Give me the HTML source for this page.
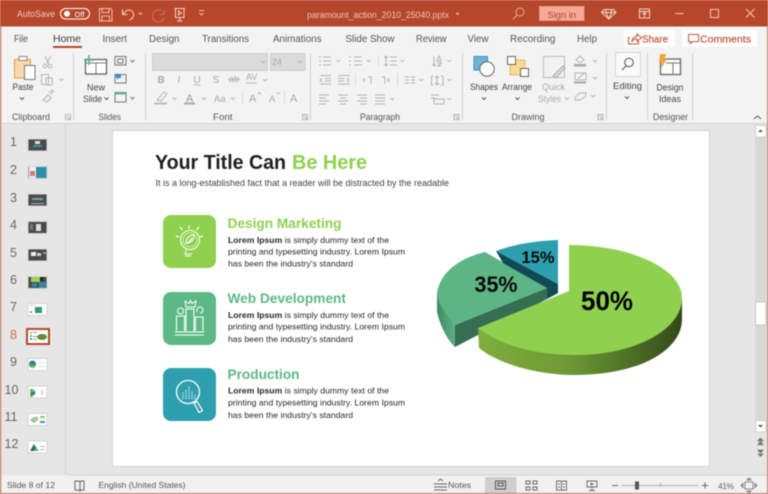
<!DOCTYPE html>
<html><head><meta charset="utf-8"><style>
html,body{margin:0;padding:0;width:768px;height:494px;overflow:hidden;background:#e6e6e6}
svg{display:block;filter:blur(.4px)}
text{font-family:"Liberation Sans",sans-serif;white-space:pre}
.rb{font-size:9px;fill:#555}
.dim{fill:#aaa}
.tab{font-size:10px;fill:#555}
.ic{fill:none;stroke:#888;stroke-width:1}
.lt{fill:none;stroke:#b5b5b5;stroke-width:1}
.b{font-size:8.6px;fill:#262626}
.b tspan{font-weight:bold}
.h{font-size:14px;font-weight:bold}
.n{font-size:12.5px;fill:#666}
</style></head><body>
<svg width="768" height="494" viewBox="0 0 768 494" xmlns="http://www.w3.org/2000/svg">
<defs>
<linearGradient id="g50" x1="0" x2="1" y1="0" y2="0"><stop offset="0" stop-color="#7fae3d"/><stop offset=".45" stop-color="#6d9934"/><stop offset=".72" stop-color="#4f7327"/><stop offset="1" stop-color="#34491b"/></linearGradient>
<linearGradient id="g35" x1="0" x2="1" y1="0" y2="0"><stop offset="0" stop-color="#3f8a63"/><stop offset="1" stop-color="#5fb184"/></linearGradient>
</defs>
<rect width="768" height="494" fill="#e6e6e6"/>
<!-- title bar -->
<rect width="768" height="26.5" fill="#b7472a"/>
<text x="17" y="17" font-size="9" fill="#eecabf" textLength="38" lengthAdjust="spacingAndGlyphs">AutoSave</text>
<rect x="60.5" y="8.5" width="29" height="10.5" rx="5.2" fill="none" stroke="#fff"/>
<circle cx="67" cy="13.7" r="3" fill="#fff"/>
<text x="74.5" y="17" font-size="7.5" fill="#fff" textLength="10">Off</text>
<g fill="none" stroke="#ebc0b3" stroke-width="1">
<path d="M99.5 8.5h11l1.500 1.500v11h-12.500z M102 8.500v4h7v-4 M102 21v-5h7.500v5"/>
<path d="M122.500 9.500v5h5 M122.500 14.500l3.500-3.500c4-2.500 8 .5 7.500 4.500-.3 2-1.500 3.500-4 4.500" stroke="#f3d5cb"/>
<path d="M138.500 12.500l1.800 1.800 1.800-1.800" />
<path d="M164 10v4.500h-4 M161.500 10.500c-4-2-9 1-9 5 0 4 3 6.500 6 6.500 3 0 5-2 5.500-4.500" stroke="#c9755c"/>
<path d="M174.500 8.500h10.500 M175.500 8.500v9h8.500v-9 M179.800 17.500v3.500 M177 21h5.500 M178.500 11l3 2-3 2z" stroke="#f3d5cb"/>
<path d="M199 10.500h5 M199.500 13l2 2 2-2" />
</g>
<text x="307" y="18" font-size="9" fill="#ecc6ba" textLength="142" lengthAdjust="spacingAndGlyphs">paramount_action_2010_25040.pptx</text>
<path d="M455.500 13l2 2 2-2z" fill="#ecc6ba"/>
<g fill="none" stroke="#e3a997" stroke-width="1"><circle cx="520" cy="12" r="4"/><path d="M517 15l-4 4.500"/></g>
<rect x="539.500" y="6.500" width="44.500" height="14" fill="#f3a996" stroke="#f2bcae" stroke-dasharray="1 1"/>
<text x="547.500" y="18" font-size="9.500" fill="#b7472a" textLength="28.500" lengthAdjust="spacingAndGlyphs">Sign in</text>
<g fill="none" stroke="#f3d5cb" stroke-width="1">
<path d="M604 9.500h9.500l2.500 3-7.200 6.500-7.300-6.500z M601.500 12.500h14.500 M606 12.500l2.800 6.500 2.800-6.500 M606 9.500l0 3M611.500 9.500v3"/>
<path d="M639.500 9h10v9h-10z M639.500 11.500h10 M644.500 17v-4.500 M642.500 14.500l2-2 2 2"/>
<path d="M675 13.500h8.500" stroke="#f0c8bc"/>
<rect x="710.500" y="9.500" width="8" height="8" stroke="#f0c8bc"/>
<path d="M746 9l8.500 8.500 M754.500 9l-8.500 8.500" stroke="#f0c8bc"/>
</g>
<!-- ribbon -->
<rect y="26.500" width="768" height="97" fill="#f3f3f3"/>
<rect y="123" width="768" height="1" fill="#d5d5d5"/>
<text class="tab" x="14" y="42" textLength="14" lengthAdjust="spacingAndGlyphs">File</text>
<text class="tab" x="53" y="42" textLength="28" lengthAdjust="spacingAndGlyphs" style="fill:#3c3c3c">Home</text>
<rect x="53" y="46" width="29" height="2" fill="#b7472a"/>
<text class="tab" x="102.500" y="42" textLength="24.500" lengthAdjust="spacingAndGlyphs">Insert</text>
<text class="tab" x="149" y="42" textLength="30.500" lengthAdjust="spacingAndGlyphs">Design</text>
<text class="tab" x="202" y="42" textLength="47" lengthAdjust="spacingAndGlyphs">Transitions</text>
<text class="tab" x="273" y="42" textLength="48.500" lengthAdjust="spacingAndGlyphs">Animations</text>
<text class="tab" x="345.500" y="42" textLength="49" lengthAdjust="spacingAndGlyphs">Slide Show</text>
<text class="tab" x="416" y="42" textLength="30.500" lengthAdjust="spacingAndGlyphs">Review</text>
<text class="tab" x="467.500" y="42" textLength="21" lengthAdjust="spacingAndGlyphs">View</text>
<text class="tab" x="510" y="42" textLength="45.500" lengthAdjust="spacingAndGlyphs">Recording</text>
<text class="tab" x="577" y="42" textLength="20" lengthAdjust="spacingAndGlyphs">Help</text>
<rect x="624" y="30" width="51" height="16.500" fill="#fff"/>
<g fill="none" stroke="#c2553a"><path d="M630 37.500h-1.500v6.500h10v-3 M632 41c.5-3 2.500-4.500 5-4.500v-2.500l4.500 3.700-4.500 3.700v-2.500c-2 0-3.500.5-5 2.500z"/></g>
<text x="642" y="42.500" font-size="10" fill="#c2553a" font-weight="500" stroke="#c2553a" stroke-width=".2" textLength="26" lengthAdjust="spacingAndGlyphs">Share</text>
<rect x="682" y="30" width="75" height="16.500" fill="#fff"/>
<path d="M688.500 34.500h10v7h-6l-2 2v-2h-2z" fill="none" stroke="#c2553a"/>
<text x="700" y="42.500" font-size="10" fill="#c2553a" stroke="#c2553a" stroke-width=".2" textLength="51" lengthAdjust="spacingAndGlyphs">Comments</text>
<g fill="#d0d0d0"><rect x="73" y="53" width="1" height="67"/><rect x="145" y="53" width="1" height="67"/><rect x="310" y="53" width="1" height="67"/><rect x="462" y="53" width="1" height="67"/><rect x="606" y="53" width="1" height="67"/><rect x="647" y="53" width="1" height="67"/><rect x="692" y="53" width="1" height="67"/></g>
<!-- clipboard -->
<rect x="14.500" y="59.500" width="16" height="18.500" fill="#f8d9a8" stroke="#e59a3e"/>
<rect x="19" y="56.500" width="8" height="4" fill="#fff" stroke="#888"/>
<rect x="24.500" y="65.500" width="10.500" height="14" fill="#fff" stroke="#777"/>
<text class="rb" x="12.500" y="90" textLength="21" lengthAdjust="spacingAndGlyphs" style="fill:#444">Paste</text>
<path d="M20 97.500l2 2 2-2" class="ic" style="stroke:#555"/>
<g class="lt"><path d="M45 56l3.500 8 M50.500 56l-3.500 8"/><circle cx="45" cy="66" r="1.800"/><circle cx="50" cy="66" r="1.800"/><path d="M41.500 74.500h7v10h-7z M46 78h6v7h-6z"/><path d="M43 100l5-5 3 3-4 4z M49 93l3-3 1.500 1.500-3 3"/><path d="M59.500 78.500l2 2 2-2"/></g>
<text class="rb" x="12" y="120" textLength="38" lengthAdjust="spacingAndGlyphs">Clipboard</text>
<path d="M65.500 114.500h5v5h-5z M67 116l3 3" fill="none" stroke="#aaa" stroke-width=".8"/>
<!-- slides -->
<rect x="85.500" y="59.500" width="21" height="14.500" fill="#fff" stroke="#666" stroke-width="1.300"/>
<path d="M85.500 63h21 M96 63v11" stroke="#777" fill="none"/>
<path d="M89 55v10 M84 60h10" stroke="#4fb982" stroke-width="1.600" fill="none"/>
<text class="rb" x="87" y="90.500" textLength="18" lengthAdjust="spacingAndGlyphs" style="fill:#444">New</text>
<text class="rb" x="83" y="102" textLength="19" lengthAdjust="spacingAndGlyphs" style="fill:#444">Slide</text>
<path d="M104.500 97.500l2 2 2-2" class="ic" style="stroke:#555"/>
<g class="ic" style="stroke:#777"><rect x="115" y="56.500" width="11" height="8.500"/><path d="M118 59h5v4h-5z"/><path d="M130.500 60l2 2 2-2"/><rect x="115" y="74.500" width="11" height="8.500"/><rect x="115" y="92.500" width="11" height="9.500"/><path d="M130.500 97l2 2 2-2"/></g>
<path d="M115 92.500h11v2h-11z" fill="#62b487"/>
<path d="M115 76l3-3v2h3v3h-3v2z" fill="#3a8fc4"/>
<text class="rb" x="98.500" y="120" textLength="22.500" lengthAdjust="spacingAndGlyphs">Slides</text>
<!-- font -->
<rect x="152.500" y="53.500" width="115" height="17" fill="#dbdbdb" stroke="#cecece"/>
<rect x="270.500" y="53.500" width="34.500" height="17" fill="#dbdbdb" stroke="#cecece"/>
<path d="M261 61l2 2 2-2 M298 61l2 2 2-2" class="lt"/>
<text x="272" y="65" font-size="9" fill="#aaa">24</text>
<g font-size="10" fill="#a8a8a8">
<text x="157.500" y="83" font-weight="bold">B</text><text x="177.500" y="83" font-style="italic">I</text><text x="193.500" y="83">U</text><rect x="193.500" y="84.500" width="7" height=".8" fill="#aaa"/><text x="212.500" y="83">S</text>
<text x="229" y="82" font-size="9">ab</text><rect x="228" y="79" width="12" height=".8" fill="#aaa"/><text x="246" y="80" font-size="9">AV</text>
<path d="M246 83h11" stroke="#bbb" fill="none"/><path d="M263 79l2 2 2-2" class="lt"/>
<text x="186" y="102" font-size="11" fill="#999">A</text><text x="214" y="102" font-size="9.500">Aa</text>
<text x="249" y="102" font-size="11">A</text><text x="269" y="102" font-size="9.500">A</text><text x="290" y="102" font-size="11">A</text>
</g>
<path d="M258 94l1.500-1.500 1.500 1.500 M277 92.500l1.500 1.500 1.500-1.500" class="lt"/>
<path d="M157 100l7-8 3 2-6 7z" class="lt"/><rect x="154" y="102.500" width="13" height="2" fill="#bbb"/><rect x="184" y="102.500" width="11" height="2" fill="#aaa"/>
<path d="M172.500 97.500l2 2 2-2 M202 97.500l2 2 2-2 M231 97.500l2 2 2-2" class="lt"/>
<rect x="242" y="91" width="1" height="13" fill="#ddd"/><rect x="284" y="91" width="1" height="13" fill="#ddd"/>
<text class="rb" x="213" y="120" textLength="19.500" lengthAdjust="spacingAndGlyphs">Font</text>
<path d="M302.500 114.500h5v5h-5z M304 116l3 3" class="lt" stroke-width=".8"/>
<!-- paragraph -->
<g class="lt">
<path d="M319 57h2 M319 61h2 M319 65h2 M323 57h8 M323 61h8 M323 65h8 M336.500 60l1.800 1.800 1.800-1.800"/>
<path d="M349 57h2 M349 61h2 M349 65h2 M354 57h8 M354 61h8 M354 65h8 M367 60l1.800 1.800 1.800-1.800"/>
<path d="M386 56v10 M384 58l2-2 2 2 M384 64l2 2 2-2 M390 57h7 M390 61h7 M390 65h7 M400.500 60l1.800 1.800 1.800-1.800"/>
<path d="M434 56v10 M432 64l2 2 2-2 M439 56l-2 5h4z M437.500 63h4l-4 3h4 M447.500 60l1.800 1.800 1.800-1.800"/>
<path d="M320 75.500h11 M325 78.500h6 M325 81h6 M320 84h11 M322 78l-2 2 2 2"/>
<path d="M338 75.500h12 M338 78.500h6 M338 81h6 M338 84h12 M347 78l2 2-2 2"/>
<path d="M363 78l2 2-2 2 M368 77h3v7 M381 78l-0 0 M382 77h3v7 M389.500 78l-2 2 2 2"/>
<path d="M405 77h4 M405 80h4 M405 83h4 M411 77h4 M411 80h4 M411 83h4 M419.500 79l1.800 1.800 1.800-1.800"/>
<path d="M431.500 76h2 M441 76h2 M431.500 76v9h2 M443 76v9h-2 M437 76v9 M435 78l2-2 2 2 M435 83l2 2 2-2 M447.500 79l1.800 1.800 1.800-1.800"/>
<path d="M319 95h10 M319 98h7 M319 101h10 M319 104h7 M338 95h10 M340 98h6 M338 101h10 M340 104h6 M357 95h10 M360 98h7 M357 101h10 M360 104h7 M375 95h10 M375 98h10 M375 101h10 M375 104h10 M390.500 98l1.800 1.800 1.800-1.800"/>
<path d="M431 95h8 M431 98h4 M434 99h10v5h-10z M447.500 98l1.800 1.800 1.800-1.800"/>
</g>
<rect x="378" y="55" width="1" height="12" fill="#ddd"/><rect x="355" y="73" width="1" height="13" fill="#ddd"/><rect x="397" y="73" width="1" height="13" fill="#ddd"/>
<text class="rb" x="360" y="120" textLength="40" lengthAdjust="spacingAndGlyphs">Paragraph</text>
<path d="M454 114.500h5v5h-5z M455.500 116l3 3" class="lt" stroke-width=".8"/>
<!-- drawing -->
<rect x="474" y="56.500" width="13.500" height="13.500" fill="#6eb3d8" stroke="#3a8fc4"/>
<circle cx="487" cy="69" r="7.200" fill="#fbfbfb" stroke="#666"/>
<text class="rb" x="470" y="90" textLength="28" lengthAdjust="spacingAndGlyphs" style="fill:#444">Shapes</text>
<path d="M482 97.500l2 2 2-2" class="ic" style="stroke:#555"/>
<rect x="510" y="60" width="15" height="15" fill="#fbd98f" stroke="#e59a3e" stroke-dasharray="1.500 1"/>
<rect x="507.500" y="56.500" width="8" height="8" fill="#fff" stroke="#666"/>
<rect x="520.500" y="68.500" width="8" height="8" fill="#fff" stroke="#666"/>
<text class="rb" x="502" y="90" textLength="30" lengthAdjust="spacingAndGlyphs" style="fill:#444">Arrange</text>
<path d="M515.500 97.500l2 2 2-2" class="ic" style="stroke:#555"/>
<rect x="543.500" y="56.500" width="21" height="21" fill="#f2f2f2" stroke="#bbb"/>
<path d="M553 76l10-10 2 2-9 10z" fill="#ddd" stroke="#aaa"/>
<text class="rb dim" x="542" y="90" textLength="23" lengthAdjust="spacingAndGlyphs">Quick</text>
<text class="rb dim" x="538" y="102" textLength="23" lengthAdjust="spacingAndGlyphs">Styles</text>
<path d="M565 97.500l2 2 2-2 M593 60l2 2 2-2 M593 77l2 2 2-2 M591 95l2 2 2-2" class="lt"/>
<path d="M576 60l4-4 4 4-4 3z" class="lt"/><rect x="574" y="64" width="12" height="2.500" fill="#aaa"/>
<path d="M575 73h11v7h-11z M578 79l6-6" class="lt"/><rect x="574" y="81.500" width="12" height="2" fill="#aaa"/>
<path d="M575 97l5-4h6l-1 4-5 3h-5z" class="lt"/>
<text class="rb" x="511.500" y="120" textLength="33" lengthAdjust="spacingAndGlyphs">Drawing</text>
<path d="M598 114.500h5v5h-5z M599.500 116l3 3" class="lt" stroke-width=".8"/>
<!-- editing -->
<rect x="615.500" y="52.500" width="25" height="24" fill="#fafafa" stroke="#d5d5d5"/>
<circle cx="629" cy="62.500" r="4.300" fill="none" stroke="#555"/><path d="M626 66l-4 4" stroke="#555" fill="none"/>
<text class="rb" x="613" y="89" textLength="29" lengthAdjust="spacingAndGlyphs" style="fill:#444">Editing</text>
<path d="M625 96.500l2 2 2-2" class="ic" style="stroke:#555"/>
<!-- designer -->
<rect x="660.500" y="59" width="20" height="15.500" fill="#fbfbfb" stroke="#666" stroke-width="1.300"/>
<path d="M666 63h14.500 M673 63v11" stroke="#777" fill="none"/>
<path d="M660 54h6.500l-2.500 5h3l-6.500 10 1.500-7h-3z" fill="#f0a63c"/>
<text class="rb" x="656.500" y="90.500" textLength="27" lengthAdjust="spacingAndGlyphs" style="fill:#444">Design</text>
<text class="rb" x="659" y="102" textLength="22" lengthAdjust="spacingAndGlyphs" style="fill:#444">Ideas</text>
<text class="rb" x="653" y="120" textLength="35" lengthAdjust="spacingAndGlyphs">Designer</text>
<path d="M754 119l3.500-3 3.500 3" fill="none" stroke="#555"/>
<!-- thumb panel -->
<rect x="65" y="124" width="1" height="351" fill="#d0d0d0"/>
<g class="n">
<text x="10" y="146">1</text><text x="10" y="174">2</text><text x="10" y="202">3</text><text x="10" y="229">4</text><text x="10" y="257">5</text><text x="10" y="284">6</text><text x="10" y="311">7</text>
<text x="10" y="339" style="fill:#d2674a">8</text><text x="10" y="366">9</text><text x="4.500" y="394">10</text><text x="4.500" y="421">11</text><text x="4.500" y="448">12</text>
</g>
<g stroke="#d4d4d4" stroke-width="1">
<rect x="28" y="139" width="19" height="12" fill="#4a4a4a"/>
<rect x="28" y="166.500" width="19" height="12" fill="#2f8fa6"/>
<rect x="28" y="194" width="19" height="12" fill="#4a4a4a"/>
<rect x="28" y="221.500" width="19" height="12" fill="#4a4a4a"/>
<rect x="28" y="249" width="19" height="12" fill="#4a4a4a"/>
<rect x="28" y="276.500" width="19" height="12" fill="#4a4a4a"/>
<rect x="28" y="303.500" width="19" height="12" fill="#fff"/>
<rect x="28" y="358.500" width="19" height="12" fill="#fff"/>
<rect x="28" y="386" width="19" height="12" fill="#fff"/>
<rect x="28" y="413.500" width="19" height="12" fill="#fff"/>
<rect x="28" y="441" width="19" height="12" fill="#fff"/>
</g>
<rect x="35" y="141" width="5" height="3" fill="#ddd"/><rect x="33" y="145" width="9" height="2" fill="#3f9a95"/>
<rect x="29" y="167" width="7" height="11" fill="#eee"/><rect x="30" y="171" width="5" height="5" fill="#d87c70"/>
<rect x="32" y="198" width="11" height="2" fill="#6fa5b5"/><rect x="31" y="203" width="13" height="1" fill="#aaa"/>
<rect x="36" y="224" width="5" height="7" fill="#ddd"/><rect x="30" y="224" width="3" height="6" fill="#777"/>
<rect x="31" y="252" width="5" height="4" fill="#eee"/><rect x="37" y="253" width="4" height="3" fill="#ccc"/><rect x="43" y="252" width="3" height="2" fill="#999"/>
<rect x="31" y="277" width="9" height="5" fill="#9ccf55"/><rect x="32" y="283" width="5" height="4" fill="#1f8ea5"/><rect x="39" y="282" width="7" height="6" fill="#3a88a8"/><rect x="40" y="277" width="3" height="4" fill="#222"/>
<rect x="35" y="307" width="7" height="6" fill="#3a8f75"/><rect x="39" y="309" width="3" height="3" fill="#2e9fae"/><rect x="30" y="305" width="5" height="1" fill="#c5e09b"/><rect x="30" y="311" width="2" height="2" fill="#5cb985"/>
<rect x="27" y="329" width="22" height="15" fill="#fff" stroke="#b7472a" stroke-width="2"/>
<ellipse cx="42" cy="337" rx="5" ry="3" fill="#5f8f30"/><rect x="30" y="332" width="2" height="2" fill="#8fd14f"/><rect x="30" y="335" width="2" height="2" fill="#5cb985"/><rect x="30" y="338" width="2" height="2" fill="#2e9fae"/><rect x="33" y="332" width="4" height="1" fill="#999"/><rect x="33" y="336" width="4" height="1" fill="#999"/><rect x="33" y="339" width="4" height="1" fill="#999"/>
<circle cx="32.500" cy="364" r="3.500" fill="#2f7fa5"/><path d="M29 365a3.500 3 0 0 0 7 0z" fill="#6fb84f"/><rect x="39" y="362" width="6" height="1" fill="#cfe3c5"/><rect x="39" y="366" width="6" height="1" fill="#cfe3c5"/>
<path d="M30 389h3l3 3-3 3v2h-3z" fill="#6fb84f"/><rect x="31" y="392" width="4" height="3" fill="#257f8f"/><rect x="41" y="390" width="2" height="5" fill="#c5dfd5"/>
<path d="M30 420l4-3 4 3-4 3z" fill="#8fc763"/><circle cx="36" cy="419" r="2.500" fill="#bbb"/><rect x="40" y="416" width="5" height="2" fill="#8fd14f"/><rect x="40" y="421" width="5" height="2" fill="#2e9fae"/>
<path d="M30 451l4-7 4 7z" fill="#226a80"/><path d="M34 451l2-4 3 4z" fill="#5cb985"/><rect x="40" y="446" width="5" height="1" fill="#bbb"/><rect x="40" y="449" width="5" height="1" fill="#bbb"/>
<!-- slide -->
<rect x="112.500" y="130.500" width="597" height="336" fill="#fff" stroke="#d2d2d2"/>
<text x="155" y="169" font-size="20.500" font-weight="bold" fill="#1e1e1e" textLength="131" lengthAdjust="spacingAndGlyphs">Your Title Can</text>
<text x="292" y="169" font-size="20.500" font-weight="bold" fill="#8fd14f" textLength="75" lengthAdjust="spacingAndGlyphs">Be Here</text>
<text x="155.500" y="186" font-size="9" fill="#444" textLength="293.500" lengthAdjust="spacingAndGlyphs">It is a long-established fact that a reader will be distracted by the readable</text>
<rect x="163" y="215" width="53" height="53" rx="8" fill="#8fd14f"/>
<rect x="163" y="292" width="53" height="53" rx="8" fill="#5cb985"/>
<rect x="163" y="368" width="53" height="53" rx="8" fill="#2e9fae"/>
<g fill="none" stroke="#fff" stroke-width="1">
<circle cx="190" cy="240" r="9.500"/><circle cx="190" cy="240" r="7" stroke-width=".6"/>
<path d="M186 250l-1 4h7M185 256h6 M186 243c0-5 4-8 8-8 0 5-3 8-8 8z M187 244l5-6"/>
<path d="M180 227l2.500 3 M189 225.500v3.500 M199 227l-2.500 3 M176 236l3 1 M203 236l-3 1" stroke-width="1.200"/>
<path d="M176.500 331v-15h8v15 M186 331v-22h8v22 M195.500 331v-14h7.500v14 M175 332h29 M175 335h29" stroke-width="1.100"/>
<circle cx="180.500" cy="311" r="3"/><path d="M186 307l-1-6 4 2.500 1.500-3 1.500 3 4-2.500-1 6z"/><path d="M197 312v-2a3 3 0 1 1 3 3"/>
<circle cx="188" cy="392" r="11.500" stroke-width="1.300"/>
<path d="M194 403l3-1.500 5.500 9-3.500 2z" stroke-width="1.200"/>
<path d="M183 399v-7 M186 399v-10 M189 399v-13 M192 399v-8 M195 399v-5" stroke-dasharray="1.500 1" stroke-width="1.500" stroke="#b7e2e6"/>
</g>
<text class="h" x="227.500" y="228" fill="#8fd14f" textLength="114" lengthAdjust="spacingAndGlyphs">Design Marketing</text>
<text class="h" x="227.500" y="303" fill="#5cb985" textLength="118.500" lengthAdjust="spacingAndGlyphs">Web Development</text>
<text class="h" x="227.500" y="379" fill="#5cb985" textLength="72" lengthAdjust="spacingAndGlyphs">Production</text>
<g>
<text class="b" x="228" y="243" textLength="161"><tspan>Lorem Ipsum</tspan> is simply dummy text of the</text>
<text class="b" x="228" y="254.500" textLength="177">printing and typesetting industry. Lorem Ipsum</text>
<text class="b" x="228" y="266.500" textLength="125">has been the industry's standard</text>
<text class="b" x="228" y="318" textLength="161"><tspan>Lorem Ipsum</tspan> is simply dummy text of the</text>
<text class="b" x="228" y="329.500" textLength="177">printing and typesetting industry. Lorem Ipsum</text>
<text class="b" x="228" y="342" textLength="125">has been the industry's standard</text>
<text class="b" x="228" y="393.500" textLength="161"><tspan>Lorem Ipsum</tspan> is simply dummy text of the</text>
<text class="b" x="228" y="405.500" textLength="177">printing and typesetting industry. Lorem Ipsum</text>
<text class="b" x="228" y="418" textLength="125">has been the industry's standard</text>
</g>
<!-- pie -->
<path d="M437 293 L437 312 C440 325 447 340 455 347 L455 325 Z" fill="url(#g35)"/>
<path d="M455 325 L547 288 L547 299 L455 347 Z" fill="#356e52"/>
<path d="M437 293 C440 272 460 258 485 252 L547 288 L455 325 C447 316 438 305 437 293 Z" fill="#5cb585"/>
<path d="M496 251 L558 284 L558 293 L547 299 L547 288 L503 263 Z" fill="#0f4a55"/>
<path d="M496 251 C515 244 535 241 558 240 L558 284 Z" fill="#2e9fae"/>
<path d="M478 328 L479 348 C500 365 540 375 575 375 C640 375 682 350 682 319 L682 298 Z" fill="url(#g50)"/>
<path d="M569 291 L569 245 C630 245 682 268 682 298 C682 330 635 355 575 355 C535 355 500 345 478 328 Z" fill="#8fd14f"/>
<text x="581" y="310" font-size="27" font-weight="bold" fill="#000" textLength="52" lengthAdjust="spacingAndGlyphs">50%</text>
<text x="474.500" y="292" font-size="22" font-weight="bold" fill="#0a0a0a" textLength="43" lengthAdjust="spacingAndGlyphs">35%</text>
<text x="521.500" y="263" font-size="16.500" font-weight="bold" fill="#0a0a0a" textLength="33" lengthAdjust="spacingAndGlyphs">15%</text>
<!-- scrollbar -->
<rect x="755" y="125" width="11" height="307" fill="#d8d8d8"/>
<rect x="755.500" y="125.500" width="10.500" height="11.500" fill="#fff" stroke="#ccc"/>
<path d="M758 132h5l-2.500-2.500z" fill="#555"/>
<rect x="755.500" y="302" width="10.500" height="23" fill="#fff" stroke="#c8c8c8"/>
<rect x="755.500" y="420.500" width="10.500" height="11.500" fill="#fff" stroke="#ccc"/>
<path d="M758 425h5l-2.500 2.500z" fill="#555"/>
<path d="M757.500 441h6 M757.500 445h6 M760.500 438l-2.500 2.500h5z M760.500 441.500l-2.500 2.500h5z" fill="#777" stroke="#777" stroke-width=".7"/>
<path d="M757.500 450h6 M757.500 454h6 M760.500 456.500l-2.500-2.500h5z M760.500 453l-2.500-2.500h5z" fill="#777" stroke="#777" stroke-width=".7"/>
<!-- status bar -->
<rect x="0" y="475" width="768" height="19" fill="#f1f1f1"/>
<rect x="67" y="474.500" width="701" height="1" fill="#d2d2d2"/>
<text x="7" y="488" font-size="8.500" fill="#555" textLength="48" lengthAdjust="spacingAndGlyphs">Slide 8 of 12</text>
<path d="M75 481h4l1 1 1-1h3v9h-3l-1 1-1-1h-4z M80 482v8" fill="none" stroke="#666"/>
<text x="98.500" y="488" font-size="8.500" fill="#555" textLength="87" lengthAdjust="spacingAndGlyphs">English (United States)</text>
<path d="M434 484h13 M434 487h13 M434 490h13 M438 481l2.500-2 2.500 2" fill="none" stroke="#666"/>
<text x="448" y="488" font-size="8.500" fill="#555" textLength="23" lengthAdjust="spacingAndGlyphs">Notes</text>
<rect x="485" y="477" width="31.500" height="16" fill="#cfcfcf"/>
<path d="M495.500 481h10v8h-10z M498 483h5v3h-5z" fill="none" stroke="#555"/>
<path d="M526 481h4v3h-4z M533 481h4v3h-4z M526 487h4v3h-4z M533 487h4v3h-4z" fill="none" stroke="#666"/>
<path d="M556.500 481h4l1 1 1-1h4v9h-10z M561.500 482v8 M558 484h2 M558 487h2 M563 484h2 M563 487h2" fill="none" stroke="#666" stroke-width=".9"/>
<path d="M587 481h10v6h-10z M592 487v3 M589 490.500h6 M591 483l2 1-2 1z" fill="none" stroke="#666" stroke-width=".9"/>
<path d="M612 485.500h6 M702 485.500h6 M705 482.500v6" stroke="#666" fill="none"/>
<rect x="622" y="485" width="76" height="1" fill="#aaa"/><rect x="660" y="483" width="1" height="4" fill="#aaa"/>
<rect x="635" y="481.500" width="4" height="8" fill="#555"/>
<text x="718" y="489" font-size="8.500" fill="#666" textLength="16">41%</text>
<path d="M745 482h8v7h-8z M749 478l-2 2h4z M749 493l-2-2h4z M741 485.500l2-2v4z M757 485.500l-2-2v4z" fill="none" stroke="#666" stroke-width=".8"/>
<!-- window border -->
<rect x="0" y="26" width="1.200" height="468" fill="#c9765f"/>
<rect x="767" y="26" width="1" height="468" fill="#c9765f"/>
<rect x="0" y="493" width="768" height="1" fill="#c9765f"/>
</svg>
</body></html>
